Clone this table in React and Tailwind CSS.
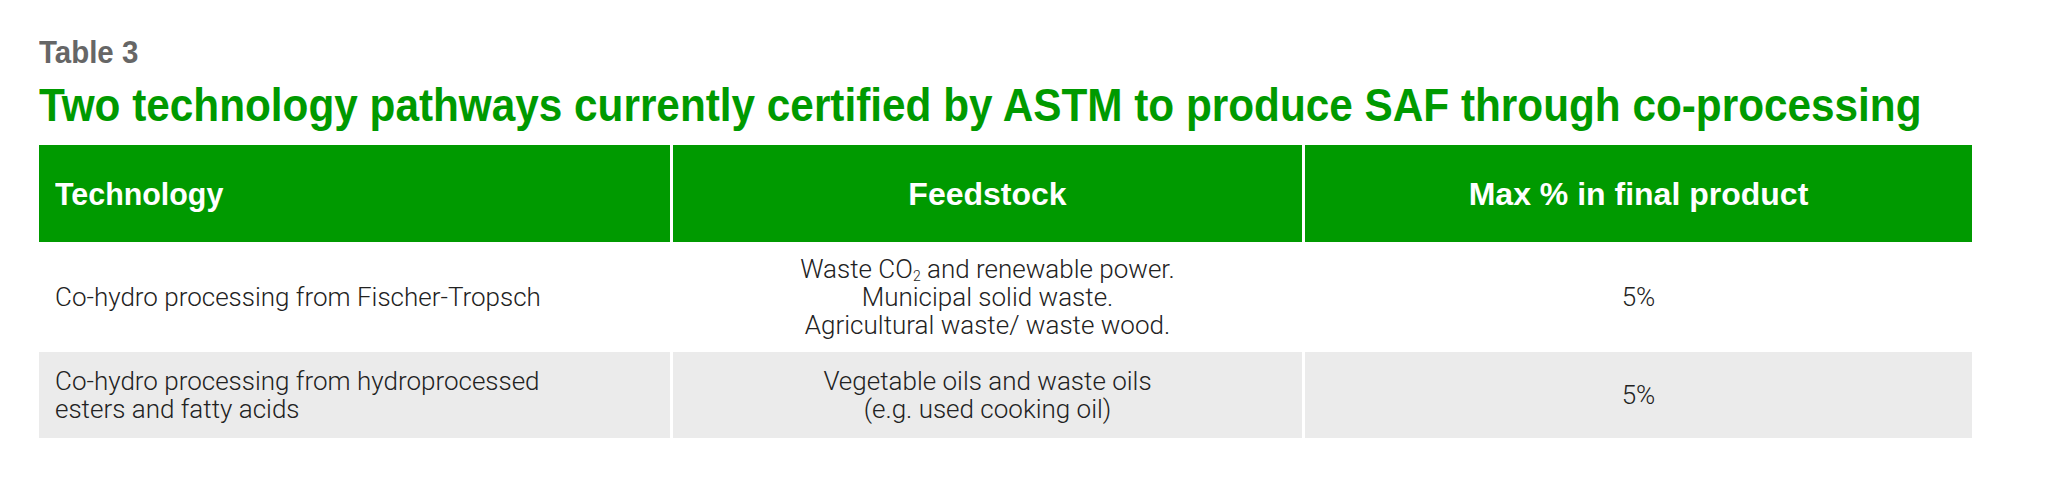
const rows = [
  {
    tech: ['Co-hydro processing from Fischer-Tropsch'],
    feed: [
      <>Waste CO<sub className="text-[14px] leading-none relative top-[3px] align-baseline">2</sub> and renewable power.</>,
      'Municipal solid waste.',
      'Agricultural waste/ waste wood.',
    ],
    max: '5%',
    bg: 'bg-white',
    h: 'h-[110px]',
  },
  {
    tech: ['Co-hydro processing from hydroprocessed', 'esters and fatty acids'],
    feed: ['Vegetable oils and waste oils', '(e.g. used cooking oil)'],
    max: '5%',
    bg: 'bg-[#ebebeb]',
    h: 'h-[86px]',
  },
]

export default function App() {
  return (
    <div className="w-[2048px] h-[478px] bg-white pl-[39px] pt-[37px] overflow-hidden">
      {/* Titulo */}
      <p className="font-['Liberation_Sans',sans-serif] font-bold text-[31px] leading-none text-[#666666] whitespace-nowrap scale-x-[0.95] origin-left">
        Table 3
      </p>
      <h1 className="mt-[13px] font-['Liberation_Sans',sans-serif] font-bold text-[47px] leading-none text-[#009a00] whitespace-nowrap scale-x-[0.9] origin-left">
        Two technology pathways currently certified by ASTM to produce SAF through co-processing
      </h1>

      {/* Tabela */}
      <div className="mt-[17px] grid grid-cols-[631px_629px_667px] gap-x-[3px] font-['Roboto',sans-serif]">
        <div className="h-[97px] bg-[#009a00] flex items-center pl-[16px]">
          <span className="font-['Liberation_Sans',sans-serif] font-bold text-[32px] text-white whitespace-nowrap scale-x-[0.95] origin-left">Technology</span>
        </div>
        <div className="h-[97px] bg-[#009a00] flex items-center justify-center">
          <span className="font-['Liberation_Sans',sans-serif] font-bold text-[32px] text-white">Feedstock</span>
        </div>
        <div className="h-[97px] bg-[#009a00] flex items-center justify-center">
          <span className="font-['Liberation_Sans',sans-serif] font-bold text-[32px] text-white">Max % in final product</span>
        </div>

        {rows.map((r, i) => (
          <div key={i} className="contents">
            <div className={`${r.bg} ${r.h} flex flex-col justify-center pl-[16px] text-[26px] leading-[28px] font-light text-[#222222]`}>
              {r.tech.map((t, j) => <span key={j}>{t}</span>)}
            </div>
            <div className={`${r.bg} ${r.h} flex flex-col justify-center items-center text-center text-[26px] leading-[28px] font-light text-[#222222]`}>
              {r.feed.map((t, j) => <span key={j}>{t}</span>)}
            </div>
            <div className={`${r.bg} ${r.h} flex items-center justify-center text-[26px] font-light text-[#222222]`}>
              {r.max}
            </div>
          </div>
        ))}
      </div>
    </div>
  )
}
